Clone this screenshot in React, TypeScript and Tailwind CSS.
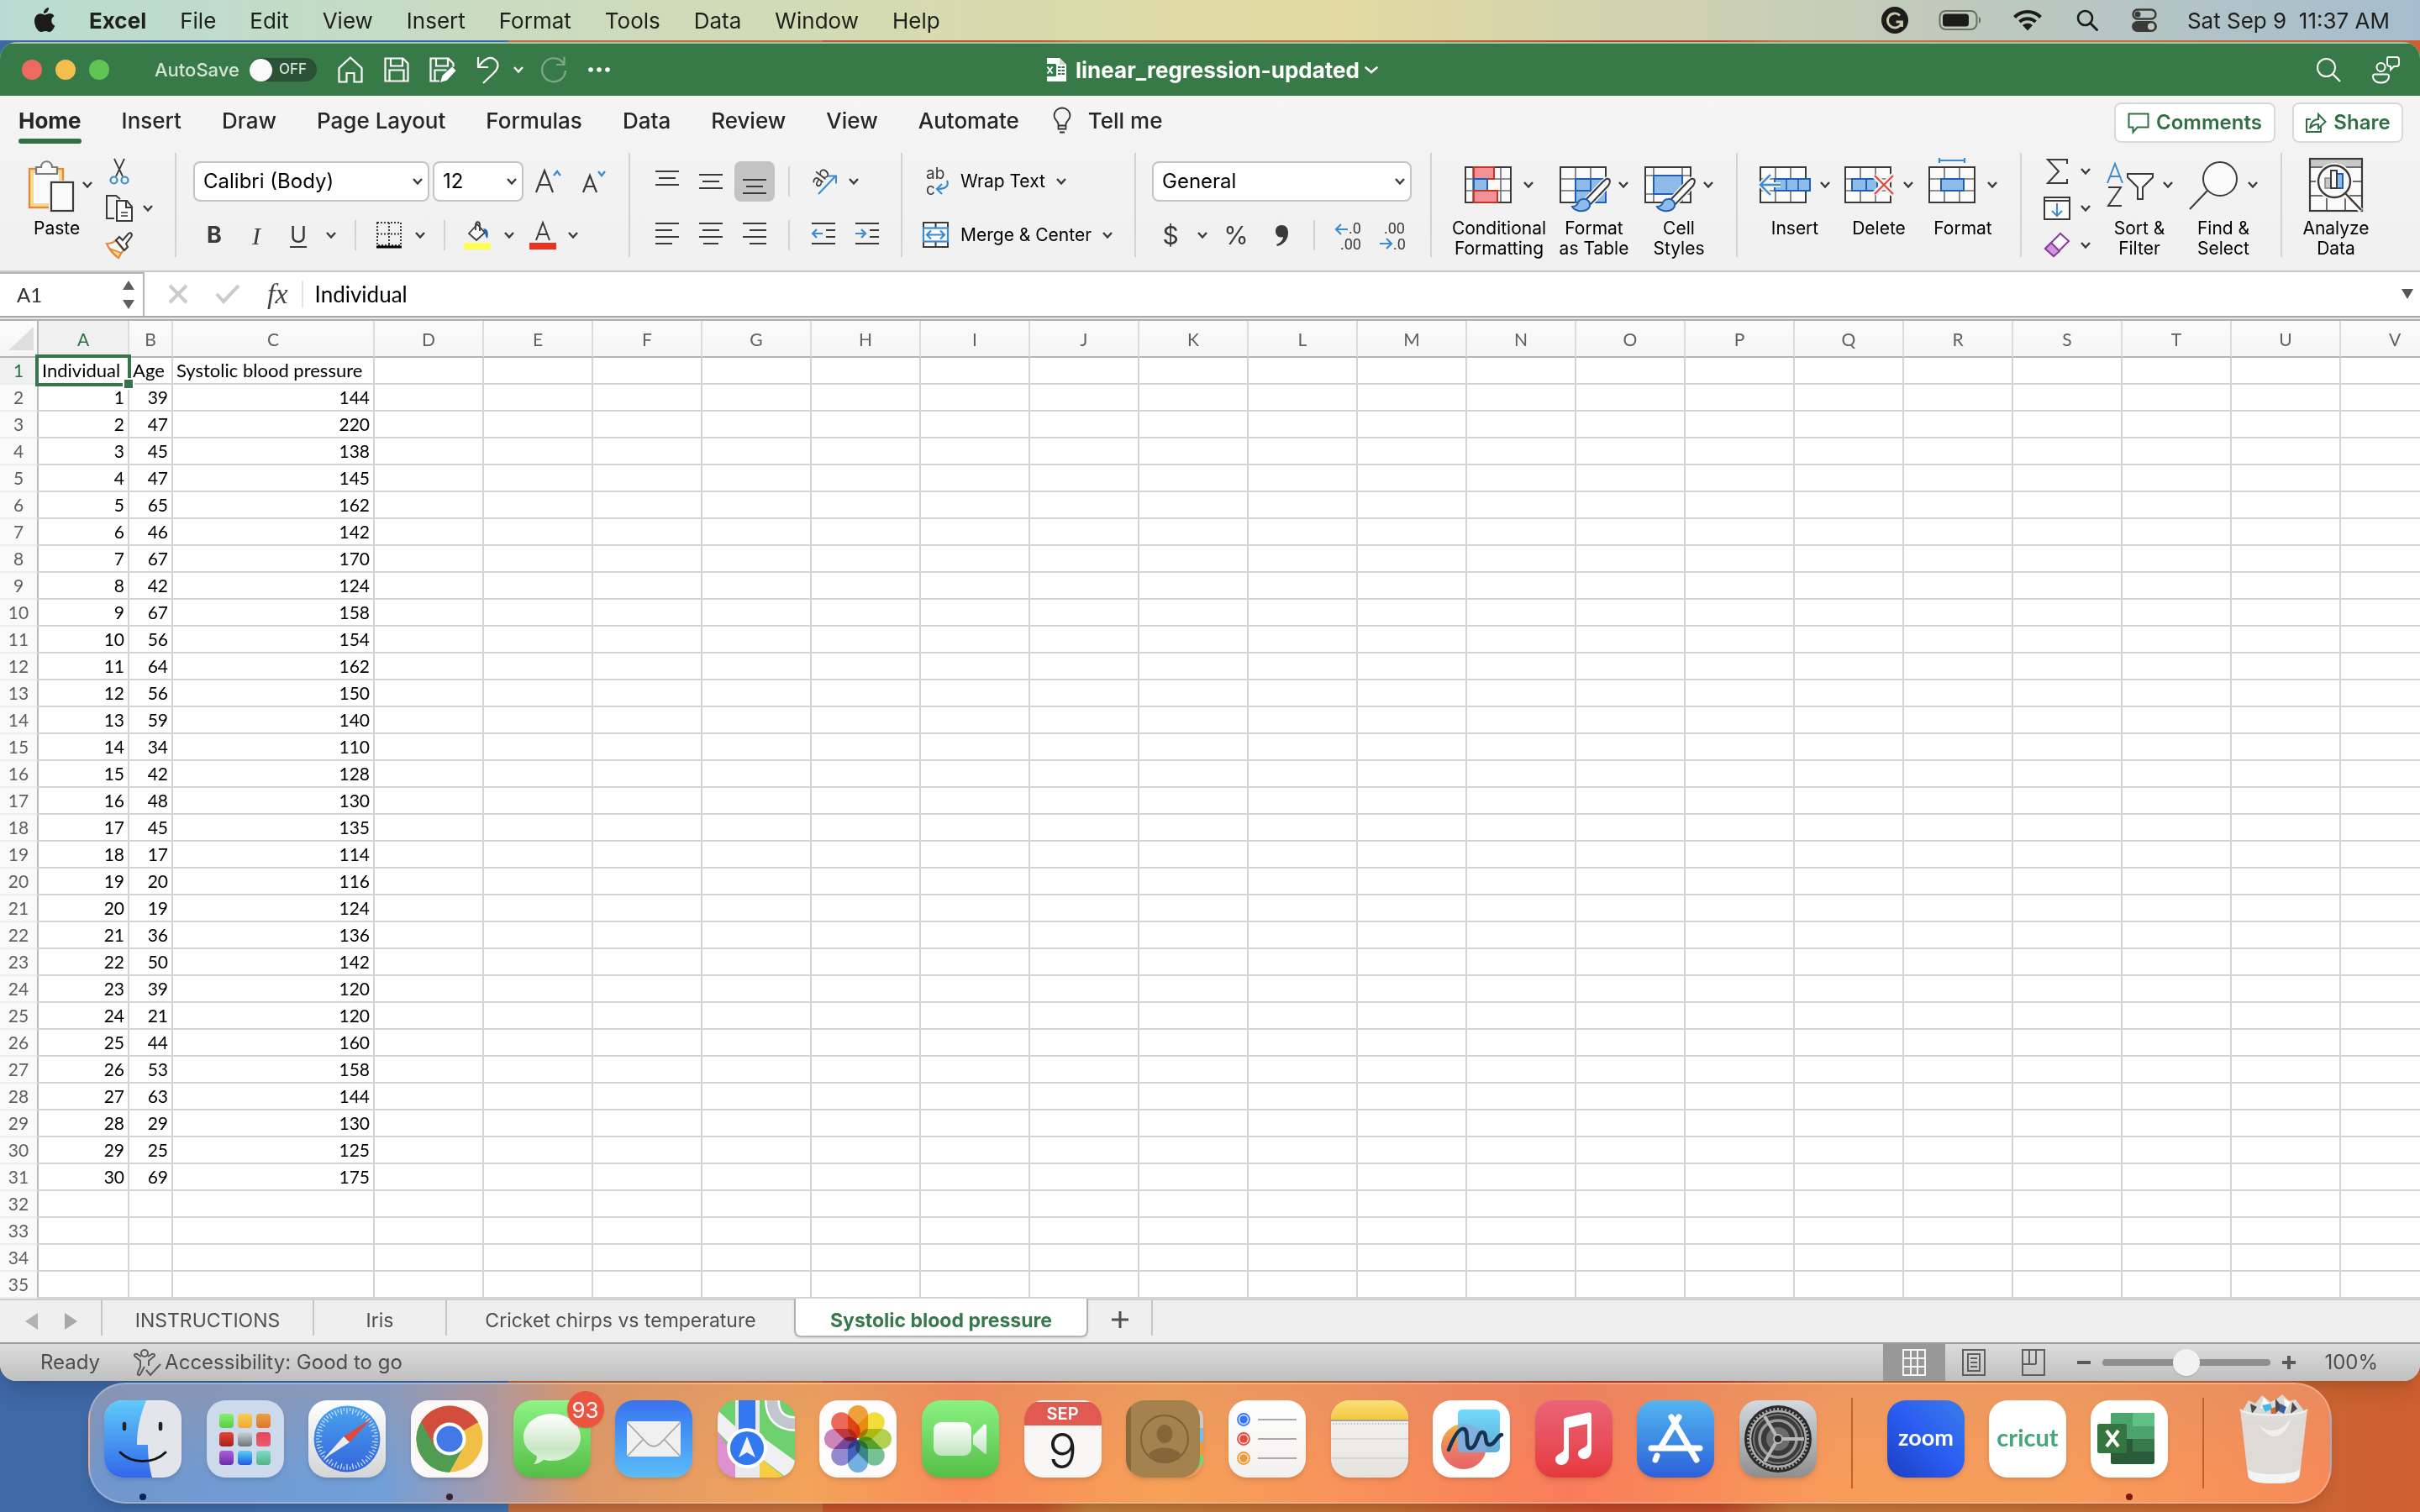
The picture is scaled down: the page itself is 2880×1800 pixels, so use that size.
import { useState } from 'react';
import type { ReactNode } from 'react';

const menus = ['File', 'Edit', 'View', 'Insert', 'Format', 'Tools', 'Data', 'Window', 'Help'];

const ribbonTabs = [
  'Home',
  'Insert',
  'Draw',
  'Page Layout',
  'Formulas',
  'Data',
  'Review',
  'View',
  'Automate',
];

const columns = 'ABCDEFGHIJKLMNOPQRSTUV'.split('');

// [age, systolic blood pressure]
const readings = [
  [39, 144],
  [47, 220],
  [45, 138],
  [47, 145],
  [65, 162],
  [46, 142],
  [67, 170],
  [42, 124],
  [67, 158],
  [56, 154],
  [64, 162],
  [56, 150],
  [59, 140],
  [34, 110],
  [42, 128],
  [48, 130],
  [45, 135],
  [17, 114],
  [20, 116],
  [19, 124],
  [36, 136],
  [50, 142],
  [39, 120],
  [21, 120],
  [44, 160],
  [53, 158],
  [63, 144],
  [29, 130],
  [25, 125],
  [69, 175],
];

const INK = '#3b3a39';
const BLUE = '#3c8bd0';
const FILL = '#8fbbe8';
const EDGE = '#1f60b5';

interface IconProps {
  w: number;
  h: number;
  className?: string;
  children: ReactNode;
}

function Icon({ w, h, className = '', children }: IconProps) {
  return (
    <svg
      width={w}
      height={h}
      viewBox={`0 0 ${w} ${h}`}
      fill="none"
      className={`shrink-0 overflow-visible ${className}`}
      aria-hidden="true"
    >
      {children}
    </svg>
  );
}

function Chevron({ color = INK }: { color?: string }) {
  return (
    <Icon w={12} h={8}>
      <path d="M1 1l5 5.5L11 1" stroke={color} strokeWidth="2.4" />
    </Icon>
  );
}

function ChevronButton({ label, className = '' }: { label: string; className?: string }) {
  return (
    <button
      type="button"
      aria-label={label}
      className={`flex h-9 w-7 shrink-0 items-center justify-center ${className}`}
    >
      <Chevron />
    </button>
  );
}

interface ToolProps {
  label: string;
  className?: string;
  children: ReactNode;
}

function Tool({ label, className = '', children }: ToolProps) {
  return (
    <button
      type="button"
      aria-label={label}
      className={`flex shrink-0 items-center justify-center ${className}`}
    >
      {children}
    </button>
  );
}

function ShortRule({ className = '' }: { className?: string }) {
  return <span className={`h-9 w-0.5 shrink-0 bg-[#d3d3d3] ${className}`} />;
}

function Group({ className = '', children }: { className?: string; children: ReactNode }) {
  return (
    <div className={`h-[124px] shrink-0 border-r-2 border-[#d3d3d3] ${className}`}>{children}</div>
  );
}

interface SelectBoxProps {
  label: string;
  value: string;
  className?: string;
}

function SelectBox({ label, value, className = '' }: SelectBoxProps) {
  return (
    <span className={`relative block h-12 shrink-0 ${className}`}>
      <select
        aria-label={label}
        defaultValue={value}
        className="h-full w-full appearance-none rounded-lg border-2 border-[#c4c4c4] bg-white pl-2.5 text-[24px] text-black"
      >
        <option>{value}</option>
      </select>
      <span className="pointer-events-none absolute inset-y-0 right-2 flex items-center">
        <Chevron />
      </span>
    </span>
  );
}

interface BigToolProps {
  lines: string[];
  icon: ReactNode;
  menu?: boolean;
  className?: string;
}

function BigTool({ lines, icon, menu = true, className = '' }: BigToolProps) {
  return (
    <button type="button" className={`flex shrink-0 flex-col items-center pt-1.5 ${className}`}>
      <span className="flex h-16 items-center gap-2.5">
        {icon}
        {menu && <Chevron />}
      </span>
      <span className="mt-2 block text-center text-[21px] leading-6 text-black">
        {lines.map((line) => (
          <span key={line} className="block whitespace-nowrap">
            {line}
          </span>
        ))}
      </span>
    </button>
  );
}

function MenuBar() {
  return (
    <header className="flex h-12 shrink-0 items-center bg-linear-to-r from-[#b9dcd2] via-[#e2daa0] via-55% to-[#a5bdcf] pl-10 pr-9 text-[26px] text-[#20211d]">
      <Icon w={26} h={32}>
        <path
          d="M18 1c.4 3.600-2.600 7-6 7C11.500 4.500 14.500 1.500 18 1zM24.500 11.300c-2 1.200-3.200 3-3.200 5.400 0 2.800 1.600 4.900 4 5.900-.9 2.800-3.400 7.400-6.300 7.400-1.800 0-2.700-1.100-5-1.100s-3.300 1.100-5 1.100C5.300 30 1 23.500 1 17c0-5.600 3.600-8.700 7.200-8.700 2.300 0 4 1.400 5.500 1.400 1.400 0 3.300-1.600 6-1.600 1.700 0 3.700.9 4.800 3.200z"
          fill="#1b1c19"
        />
      </Icon>
      <nav className="ml-10 flex items-center gap-10">
        <button type="button" className="font-bold">
          Excel
        </button>
        {menus.map((name) => (
          <button type="button" key={name}>
            {name}
          </button>
        ))}
      </nav>
      <div className="ml-auto flex items-center">
        <Icon w={32} h={32}>
          <circle cx="16" cy="16" r="16" fill="#1c1c1a" />
          <path
            d="M22 10.500A8.500 8.500 0 1 0 24.300 18H17.500M24.500 17v7"
            stroke="#cdc9ae"
            strokeWidth="2.800"
          />
        </Icon>
        <Icon w={52} h={26} className="ml-9">
          <rect x="1.500" y="2" width="44" height="22" rx="7" stroke="#6c6d63" strokeWidth="2" />
          <rect x="5" y="5.500" width="31" height="15" rx="3.500" fill="#1c1c1a" />
          <path d="M48 9c3 1 3 7 0 8z" fill="#6c6d63" />
        </Icon>
        <Icon w={36} h={26} className="ml-9">
          <path
            d="M2.500 9.500a22 22 0 0 1 31 0M8.500 15a14 14 0 0 1 19 0"
            stroke="#1c1c1a"
            strokeWidth="4"
          />
          <path d="M12 19a9 9 0 0 1 12 0l-6 6.500z" fill="#1c1c1a" />
        </Icon>
        <Icon w={26} h={26} className="ml-10">
          <circle cx="10.500" cy="10.500" r="8.500" stroke="#1c1c1a" strokeWidth="2.600" />
          <path d="M16.500 16.500l8 8" stroke="#1c1c1a" strokeWidth="3" strokeLinecap="round" />
        </Icon>
        <Icon w={30} h={28} className="ml-10">
          <rect x="1.500" y="1.500" width="27" height="11" rx="5.500" stroke="#3a3b37" strokeWidth="2.400" />
          <circle cx="7" cy="7" r="3.500" fill="#3a3b37" />
          <rect x="0" y="15" width="30" height="13" rx="6.500" fill="#3a3b37" />
          <circle cx="23" cy="21.500" r="4" fill="#c4c9bd" />
        </Icon>
        <time className="ml-9 whitespace-pre">Sat Sep 9  11:37 AM</time>
      </div>
    </header>
  );
}

function TitleBar() {
  return (
    <div className="flex h-16 shrink-0 items-center border-t-2 border-[#a4c5ac] bg-[#387948] pl-[26px] pr-[24px] text-white">
      <div className="flex flex-1 items-center">
        <div className="flex gap-4">
          <button type="button" aria-label="Close" className="size-6 rounded-full bg-[#ee6a5f]" />
          <button type="button" aria-label="Minimize" className="size-6 rounded-full bg-[#f5bf4f]" />
          <button type="button" aria-label="Zoom" className="size-6 rounded-full bg-[#61c554]" />
        </div>
        <label className="ml-[54px] flex items-center gap-3 text-[22px] font-medium text-[#d3e4d7]">
          AutoSave
          <input type="checkbox" className="peer sr-only" />
          <span className="flex h-7 w-20 items-center rounded-full bg-[#2b5136] text-[17px] font-medium shadow-inner">
            <span className="mr-2 size-[27px] rounded-full bg-[#fafafa]" />
            OFF
          </span>
        </label>
        <Tool label="Home" className="ml-6">
          <Icon w={32} h={34}>
            <path
              d="M2.500 15L16 2.500 29.500 15v16.500h-9V21h-9v10.500h-9z"
              stroke="white"
              strokeWidth="2.200"
            />
          </Icon>
        </Tool>
        <Tool label="Save" className="ml-6">
          <Icon w={30} h={30}>
            <path
              d="M1.500 1.500h21l6 6v21h-27zM8 1.500v9h14v-9M6.500 28.500v-13h17v13"
              stroke="white"
              strokeWidth="2.200"
            />
          </Icon>
        </Tool>
        <Tool label="Save As" className="ml-6">
          <Icon w={32} h={32}>
            <path
              d="M12 29.500H1.500v-27h21l6 6v4M8 2.500v9h14v-9M6.500 29v-12.500h14"
              stroke="white"
              strokeWidth="2.200"
            />
            <path d="M13 31l2.500-8L27 12.500l4.500 4.500L21 28.500z" fill="white" />
          </Icon>
        </Tool>
        <Tool label="Undo" className="ml-6">
          <Icon w={28} h={34}>
            <path
              d="M2 2v12h12M2.500 13.500C8 5 16 0 22 5c7 6 2 13-2 16.500L8 33"
              stroke="white"
              strokeWidth="2.200"
            />
          </Icon>
        </Tool>
        <Tool label="Undo history" className="ml-4">
          <Chevron color="white" />
        </Tool>
        <Tool label="Redo" className="ml-5">
          <Icon w={32} h={34}>
            <path
              d="M28.500 1.500v9.500H19M28 10A14 14 0 1 0 30 18"
              stroke="#7da887"
              strokeWidth="2.200"
            />
          </Icon>
        </Tool>
        <Tool label="More" className="ml-6">
          <Icon w={28} h={6}>
            <circle cx="4" cy="3" r="2.800" fill="white" />
            <circle cx="14" cy="3" r="2.800" fill="white" />
            <circle cx="24" cy="3" r="2.800" fill="white" />
          </Icon>
        </Tool>
      </div>
      <button type="button" className="flex items-center gap-2.5 text-[26px] font-bold">
        <Icon w={28} h={30}>
          <path d="M4 1h15l8 8v20H4z" fill="white" />
          <path d="M19 1v8h8z" fill="#cfdcd2" />
          <path d="M17 12h9M17 16h9M17 20h9" stroke="#387948" strokeWidth="2" strokeDasharray="3.500 1" />
          <rect x="0" y="8" width="15" height="15" rx="1.500" fill="#2e7d46" />
          <path d="M4.500 11.500l6 8M10.500 11.500l-6 8" stroke="white" strokeWidth="2" />
        </Icon>
        <span>linear_regression-updated</span>
        <Icon w={16} h={9} className="-ml-1">
          <path d="M1.500 1.500L8 7l6.500-5.500" stroke="white" strokeWidth="2.600" strokeLinecap="round" />
        </Icon>
      </button>
      <div className="flex flex-1 items-center justify-end gap-9">
        <Tool label="Search">
          <Icon w={30} h={30}>
            <circle cx="12.500" cy="12.500" r="10.500" stroke="white" strokeWidth="2" />
            <path d="M20 20l9 9" stroke="white" strokeWidth="2.200" />
          </Icon>
        </Tool>
        <Tool label="Presence">
          <Icon w={34} h={34}>
            <circle cx="11.500" cy="14" r="5" stroke="white" strokeWidth="2" />
            <path
              d="M4 22.500h15c2 0 2.500 2 1.500 5-1.500 3.500-5 5-9 5s-7.500-1.500-9-5c-1-3-.5-5 1.500-5zM20 2h10c2 0 3 1 3 3v5c0 2-1 3-3 3h-3l-4 4v-4c-3 0-4-1-4-3V4c0-1 .5-2 1-2z"
              stroke="white"
              strokeWidth="2"
            />
          </Icon>
        </Tool>
      </div>
    </div>
  );
}

function RibbonTabs() {
  const [active, setActive] = useState('Home');

  return (
    <div className="flex h-16 shrink-0 items-center pl-[22px] pr-5 text-[26px] font-medium text-[#262626]">
      <div role="tablist" className="-mt-1.5 flex items-center gap-12">
        {ribbonTabs.map((name) => (
          <button
            type="button"
            role="tab"
            key={name}
            aria-selected={active === name}
            onClick={() => setActive(name)}
            className={`relative whitespace-nowrap ${active === name ? 'font-bold' : ''}`}
          >
            {name}
            {active === name && (
              <span className="absolute inset-x-0 -bottom-2 h-1.5 rounded-full bg-[#2f6f43]" />
            )}
          </button>
        ))}
      </div>
      <button type="button" className="-mt-1.5 ml-10 flex items-center gap-5">
        <Icon w={22} h={31}>
          <path
            d="M6.500 20c0-4-5-5-5-10.500a9.500 9 0 0 1 19 0c0 5.500-5 6.500-5 10.500v5.500h-9zM6.500 21.500h9M8 29.500h6"
            stroke="#333"
            strokeWidth="1.800"
          />
        </Icon>
        Tell me
      </button>
      <div className="ml-auto flex items-center gap-5 text-[24px] font-semibold text-[#2f6f43]">
        <button
          type="button"
          className="flex h-12 w-48 items-center justify-center gap-2 rounded-lg border-2 border-[#d9d9d9] bg-white"
        >
          <Icon w={26} h={26}>
            <path d="M1.500 2.500h23v16h-13l-5 6v-6h-5z" stroke="#2f6f43" strokeWidth="2" />
          </Icon>
          Comments
        </button>
        <button
          type="button"
          className="flex h-12 w-[132px] items-center justify-center gap-2 rounded-lg border-2 border-[#d9d9d9] bg-white"
        >
          <Icon w={26} h={26}>
            <path
              d="M7 9H2v15h17v-6M6 20c1-7 4-11 10-11V3l8.500 9-8.500 8v-5c-5 0-7.500 1-10 5z"
              stroke="#2f6f43"
              strokeWidth="2"
            />
          </Icon>
          Share
        </button>
      </div>
    </div>
  );
}

const lineSets = {
  top: 'M0 5h28M4 13h20M0 21h28',
  middle: 'M0 9h28M4 17h20M0 25h28',
  bottom: 'M0 15h28M4 23h20M0 31h28',
  left: 'M0 3h28M0 11h20M0 19h28M0 27h20',
  center: 'M0 3h28M4 11h20M0 19h28M5 27h18',
  right: 'M0 3h28M8 11h20M0 19h28M8 27h20',
};

function Lines({ d }: { d: string }) {
  return (
    <Icon w={28} h={34}>
      <path d={d} stroke={INK} strokeWidth="2.200" />
    </Icon>
  );
}

// 56x44 sheet used by most of the large cell icons
function SheetGrid({ y = 10 }: { y?: number }) {
  return (
    <g transform={`translate(0 ${y})`}>
      <rect x="1" y="1" width="54" height="42" fill="#fafafa" />
      <path d="M19 1v42M37 1v42M1 15h54M1 29h54" stroke="#6d6d6d" strokeWidth="1.600" />
      <rect x="1" y="1" width="54" height="42" stroke={INK} strokeWidth="2" />
    </g>
  );
}

function Brush() {
  return (
    <>
      <path d="M58 25c3 1 2 5 0 8L37 55l-6-5 20-21c3-3 5-5 7-4z" fill="#fafafa" stroke="#f2f2f2" strokeWidth="5" />
      <path d="M58 25c3 1 2 5 0 8L37 55l-6-5 20-21c3-3 5-5 7-4z" fill="#fafafa" stroke={INK} strokeWidth="2" />
      <path
        d="M28 49c4-1 9 3 8 8-1 5-8 7-13 6-4-1-7-3-8-5 4 0 6-2 7-5 1-2 3-4 6-4z"
        fill={FILL}
        stroke={EDGE}
        strokeWidth="2"
      />
    </>
  );
}

function Ribbon() {
  return (
    <div className="flex h-[146px] shrink-0 overflow-hidden border-b-2 border-[#c9c9c9] pt-1">
      <Group className="flex w-[210px] pl-8">
        <button type="button" className="flex w-20 flex-col pt-1.5">
          <span className="flex h-16 items-center gap-2">
            <Icon w={58} h={64}>
              <rect x="3" y="13" width="40" height="46" fill="#f5d990" stroke="#e08b3e" strokeWidth="2.400" />
              <rect x="8" y="18" width="30" height="36" fill="#fafafa" />
              <path
                d="M11 19v-8h6c0-9 13-9 13 0h6v8z"
                fill="#fafafa"
                stroke="#7a7a7a"
                strokeWidth="2.200"
              />
              <rect x="26" y="27" width="32" height="37" fill="#f2f2f2" />
              <rect x="29" y="29" width="26" height="34" fill="#fafafa" stroke={INK} strokeWidth="2.200" />
            </Icon>
            <Chevron />
          </span>
          <span className="mt-2 block pl-2 text-left text-[21px] leading-6 text-black">Paste</span>
        </button>
        <div className="ml-3.5 flex flex-col gap-3 pt-1.5">
          <Tool label="Cut" className="h-8 w-8">
            <Icon w={32} h={32}>
              <path d="M10 1l10 21M22 1L12 22" stroke={INK} strokeWidth="1.800" />
              <circle cx="9.500" cy="26.500" r="4" stroke={BLUE} strokeWidth="2.200" />
              <circle cx="22.500" cy="26.500" r="4" stroke={BLUE} strokeWidth="2.200" />
            </Icon>
          </Tool>
          <div className="flex h-8 items-center">
            <Tool label="Copy" className="w-8">
              <Icon w={32} h={32}>
                <path d="M10 28H1V1h11l5 4" stroke={INK} strokeWidth="2" />
                <path d="M13 7h12l6 7v17H13zM24 7v8h7" fill="#fafafa" stroke={INK} strokeWidth="2" />
                <path d="M18 21h8M18 25h8" stroke={INK} strokeWidth="1.500" />
              </Icon>
            </Tool>
            <ChevronButton label="Copy options" className="ml-1" />
          </div>
          <Tool label="Format Painter" className="h-8 w-8">
            <Icon w={32} h={32}>
              <path d="M1 14c5 0 8-1 11-4l9 12c-2 2-4 5-6 9C9 27 4 21 1 14z" fill="#fafafa" stroke="#e08b3e" strokeWidth="2.200" />
              <path d="M5 20l13 5-3 6C11 28 8 25 5 20z" fill="#f5d990" stroke="#e08b3e" strokeWidth="1.800" />
              <path
                d="M12 10l4-4 4 4 7-8c3-2 5 1 3 4l-6 8 2 4-4 4z"
                fill="#fafafa"
                stroke={INK}
                strokeWidth="2"
              />
            </Icon>
          </Tool>
        </div>
      </Group>

      <Group className="w-[540px] pl-5 pt-2.5">
        <div className="flex items-center">
          <SelectBox label="Font" value="Calibri (Body)" className="w-[281px]" />
          <SelectBox label="Font Size" value="12" className="ml-1 w-[108px]" />
          <Tool label="Increase Font Size" className="ml-3.5">
            <Icon w={32} h={32}>
              <path d="M1 29L11 3l10 26M5 20h12" stroke={INK} strokeWidth="2.200" />
              <path d="M22 9l4-5 4 5" stroke={BLUE} strokeWidth="2.400" />
            </Icon>
          </Tool>
          <Tool label="Decrease Font Size" className="ml-6">
            <Icon w={30} h={32}>
              <path d="M1 29L9 9l8 20M4 22h10" stroke={INK} strokeWidth="2.200" />
              <path d="M19 4l4 5 4-5" stroke={BLUE} strokeWidth="2.400" />
            </Icon>
          </Tool>
        </div>
        <div className="mt-[22px] flex h-9 items-center text-[27px] text-[#3b3a39]">
          <Tool label="Bold" className="w-[50px] font-bold">
            B
          </Tool>
          <Tool label="Italic" className="w-[50px] font-['Liberation_Serif',serif] text-[30px] italic">
            I
          </Tool>
          <Tool label="Underline" className="w-[50px] underline underline-offset-4">
            U
          </Tool>
          <ChevronButton label="Underline options" />
          <ShortRule className="ml-3.5" />
          <Tool label="Borders" className="ml-6">
            <Icon w={30} h={32}>
              <path
                d="M1 1h28v27H1zM15 1v27M1 14.500h28"
                stroke={INK}
                strokeWidth="2"
                strokeDasharray="2 2"
              />
              <path d="M0 30h30" stroke="#000" strokeWidth="3" />
            </Icon>
          </Tool>
          <ChevronButton label="Border options" className="ml-2" />
          <ShortRule className="ml-3.5" />
          <Tool label="Fill Color" className="ml-[22px]">
            <Icon w={32} h={34}>
              <path d="M6 15L16 4l9 10-10 9zM14 11V5c0-5 5-5 5 0v7" fill="#fafafa" stroke={INK} strokeWidth="1.800" />
              <path d="M23 9c5 0 7 4 5 12-3-2-2-7-5-12z" fill={EDGE} />
              <rect y="26" width="32" height="8" fill="#fffe54" />
            </Icon>
          </Tool>
          <ChevronButton label="Fill options" className="ml-2" />
          <Tool label="Font Color" className="ml-2.5">
            <Icon w={32} h={34}>
              <path d="M8 23L16 2l8 21M11 16h10" stroke={INK} strokeWidth="2" />
              <rect y="26" width="32" height="8" fill="#ea3323" />
            </Icon>
          </Tool>
          <ChevronButton label="Font color options" className="ml-1.5" />
        </div>
      </Group>

      <Group className="w-[324px] pl-[18px] pt-2.5">
        <div className="flex items-center">
          <Tool label="Top Align" className="h-12 w-[52px]">
            <Lines d={lineSets.top} />
          </Tool>
          <Tool label="Middle Align" className="h-12 w-[52px]">
            <Lines d={lineSets.middle} />
          </Tool>
          <Tool label="Bottom Align" className="mx-0.5 h-12 w-12 rounded-lg bg-[#c3c3c3]">
            <Lines d={lineSets.bottom} />
          </Tool>
          <ShortRule className="ml-3.5" />
          <Tool label="Orientation" className="ml-6">
            <Icon w={32} h={32}>
              <text
                x="0"
                y="0"
                transform="translate(10 24) rotate(-52)"
                fontSize="20"
                fill={INK}
              >
                ab
              </text>
              <path d="M10 31L30 10M21 9.500h10v9" stroke={BLUE} strokeWidth="2" />
            </Icon>
          </Tool>
          <ChevronButton label="Orientation options" className="ml-1.5" />
        </div>
        <div className="mt-[22px] flex h-9 items-center">
          <Tool label="Align Left" className="w-[52px]">
            <Lines d={lineSets.left} />
          </Tool>
          <Tool label="Center" className="w-[52px]">
            <Lines d={lineSets.center} />
          </Tool>
          <Tool label="Align Right" className="w-[52px]">
            <Lines d={lineSets.right} />
          </Tool>
          <ShortRule className="ml-3.5" />
          <Tool label="Decrease Indent" className="ml-3.5 w-[52px]">
            <Icon w={28} h={34}>
              <path d="M0 3h28M17 11h11M17 19h11M0 27h28" stroke={INK} strokeWidth="2.200" />
              <path d="M1 15h12M6 10l-5 5 5 5" stroke={BLUE} strokeWidth="2.200" />
            </Icon>
          </Tool>
          <Tool label="Increase Indent" className="w-[52px]">
            <Icon w={28} h={34}>
              <path d="M0 3h28M17 11h11M17 19h11M0 27h28" stroke={INK} strokeWidth="2.200" />
              <path d="M0 15h12M7 10l5 5-5 5" stroke={BLUE} strokeWidth="2.200" />
            </Icon>
          </Tool>
        </div>
      </Group>

      <Group className="w-[278px] pl-6 pt-2.5 text-[21px] text-black">
        <button type="button" className="flex h-12 items-center gap-[13px]">
          <Icon w={32} h={34}>
            <text x="4" y="14" fontSize="19" fill={INK}>
              ab
            </text>
            <text x="4" y="33" fontSize="19" fill={INK} className="leading-none">
              c
            </text>
            <path d="M29 16c3 7-3 10-11 10M23 20l-6 6 6 6" stroke={BLUE} strokeWidth="2.200" />
          </Icon>
          Wrap Text
          <Chevron />
        </button>
        <button type="button" className="mt-[22px] flex h-9 items-center gap-[13px] whitespace-nowrap">
          <Icon w={32} h={32}>
            <rect x="1" y="1" width="29" height="29" fill="#fafafa" stroke={INK} strokeWidth="2" />
            <path d="M15.500 1v6M15.500 24v6" stroke={INK} strokeWidth="2" />
            <rect x="1" y="7.500" width="29" height="16" fill="#fafafa" stroke={BLUE} strokeWidth="2.200" />
            <path d="M5 15.500h21M10 10.500l-5 5 5 5M21 10.500l5 5-5 5" stroke={BLUE} strokeWidth="2.200" />
          </Icon>
          Merge &amp; Center
          <Chevron />
        </button>
      </Group>

      <Group className="w-[352px] pl-[19px] pt-2.5">
        <SelectBox label="Number Format" value="General" className="w-[309px]" />
        <div className="mt-[22px] flex h-9 items-center text-[30px] text-[#3b3a39]">
          <Tool label="Currency" className="ml-1 w-9">
            $
          </Tool>
          <ChevronButton label="Currency options" className="ml-1.5" />
          <Tool label="Percent" className="ml-2 w-9">
            %
          </Tool>
          <Tool label="Comma Style" className="ml-[18px] w-9">
            <Icon w={18} h={28}>
              <path
                d="M9 2c5 0 8 3 8 9 0 8-5 14-13 16l-1-2c5-2 8-5 8-9-5 2-9-2-9-7 0-4 3-7 7-7z"
                fill={INK}
              />
            </Icon>
          </Tool>
          <ShortRule className="ml-5" />
          <Tool label="Increase Decimal" className="ml-6 font-[Roboto,sans-serif]">
            <Icon w={32} h={34}>
              <path d="M1 10h14M7 4l-6 6 6 6" stroke={BLUE} strokeWidth="2.200" />
              <text x="16" y="15" fontSize="18" fill={INK}>
                .0
              </text>
              <text x="6" y="34" fontSize="18" fill={INK}>
                .00
              </text>
            </Icon>
          </Tool>
          <Tool label="Decrease Decimal" className="ml-5 font-[Roboto,sans-serif]">
            <Icon w={32} h={34}>
              <path d="M1 27h14M9 21l6 6-6 6" stroke={BLUE} strokeWidth="2.200" />
              <text x="6" y="15" fontSize="18" fill={INK}>
                .00
              </text>
              <text x="17" y="34" fontSize="18" fill={INK}>
                .0
              </text>
            </Icon>
          </Tool>
        </div>
      </Group>

      <Group className="flex w-[364px] pl-5">
        <BigTool
          lines={['Conditional', 'Formatting']}
          className="w-[120px]"
          icon={
            <Icon w={60} h={64}>
              <rect x="1" y="11" width="54" height="42" fill="#fafafa" />
              <path d="M10 11v42M26 11v42M43 11v42M1 25h54M1 39h54" stroke="#6d6d6d" strokeWidth="1.600" />
              <rect x="1" y="11" width="54" height="42" stroke={INK} strokeWidth="2" />
              <rect x="11" y="11" width="24" height="14" fill="#f19095" stroke="#c43522" strokeWidth="2" />
              <rect x="11" y="25" width="16" height="14" fill={FILL} stroke={EDGE} strokeWidth="2" />
              <rect x="11" y="39" width="28" height="14" fill="#f19095" stroke="#c43522" strokeWidth="2" />
            </Icon>
          }
        />
        <BigTool
          lines={['Format', 'as Table']}
          className="w-[106px]"
          icon={
            <Icon w={60} h={64}>
              <SheetGrid />
              <rect x="19" y="25" width="36" height="28" fill={FILL} stroke={EDGE} strokeWidth="2" />
              <path d="M37 25v28M19 39h36" stroke={EDGE} strokeWidth="2" />
              <Brush />
            </Icon>
          }
        />
        <BigTool
          lines={['Cell', 'Styles']}
          className="w-24"
          icon={
            <Icon w={60} h={64}>
              <rect x="1" y="11" width="54" height="42" fill="#fafafa" />
              <path d="M11 11v42M45 11v42M1 21h54M1 43h54" stroke="#6d6d6d" strokeWidth="1.600" />
              <rect x="1" y="11" width="54" height="42" stroke={INK} strokeWidth="2" />
              <rect x="11" y="21" width="34" height="22" fill={FILL} stroke={EDGE} strokeWidth="2" />
              <Brush />
            </Icon>
          }
        />
      </Group>

      <Group className="flex w-[338px] pl-[18px]">
        <BigTool
          lines={['Insert']}
          className="w-[100px]"
          icon={
            <Icon w={62} h={64}>
              <SheetGrid />
              <rect x="18" y="25" width="42" height="14" fill={FILL} stroke={EDGE} strokeWidth="2" />
              <path d="M32 25v14M46 25v14" stroke={EDGE} strokeWidth="1.600" />
              <path d="M1 32h24M13 20L1 32l12 12" stroke="#f2f2f2" strokeWidth="6" />
              <path d="M1 32h24M13 20L1 32l12 12" stroke={BLUE} strokeWidth="2.400" />
            </Icon>
          }
        />
        <BigTool
          lines={['Delete']}
          className="w-[100px]"
          icon={
            <Icon w={60} h={64}>
              <SheetGrid />
              <rect x="9" y="25" width="30" height="14" fill={FILL} stroke={EDGE} strokeWidth="2" />
              <path d="M26 25v14" stroke={EDGE} strokeWidth="2" />
              <path d="M36 21l22 22M58 21L36 43" stroke="#f2f2f2" strokeWidth="7" />
              <path d="M36 21l22 22M58 21L36 43" stroke="#e0493d" strokeWidth="2.200" />
            </Icon>
          }
        />
        <BigTool
          lines={['Format']}
          className="w-[100px]"
          icon={
            <Icon w={60} h={64}>
              <SheetGrid />
              <rect x="15" y="25" width="27" height="14" fill={FILL} stroke={EDGE} strokeWidth="2" />
              <path d="M13 3h30M13 0v6M43 0v6" stroke={BLUE} strokeWidth="2.200" />
            </Icon>
          }
        />
      </Group>

      <Group className="flex w-[310px] pl-[26px]">
        <div className="flex flex-col gap-3 pt-1.5">
          <div className="flex h-8 items-center">
            <Tool label="AutoSum" className="w-8">
              <Icon w={28} h={30}>
                <path d="M26 6V1H3l13 14L3 29h23v-5" stroke={INK} strokeWidth="2" />
              </Icon>
            </Tool>
            <ChevronButton label="AutoSum options" className="ml-1" />
          </div>
          <div className="flex h-8 items-center">
            <Tool label="Fill" className="w-8">
              <Icon w={32} h={28}>
                <rect x="1" y="1" width="30" height="26" fill="#fafafa" stroke={INK} strokeWidth="2" />
                <path d="M1 5h30" stroke={INK} strokeWidth="2" />
                <path d="M16 8v15M10 17l6 6 6-6" stroke={BLUE} strokeWidth="2" />
              </Icon>
            </Tool>
            <ChevronButton label="Fill options" className="ml-1" />
          </div>
          <div className="flex h-8 items-center">
            <Tool label="Clear" className="w-8">
              <Icon w={32} h={30}>
                <path d="M2 19L20 1l10 9-18 18z" fill="#fafafa" stroke="#8e3a9e" strokeWidth="2" />
                <path d="M2 19l7-7 10 10-7 6z" fill="#cf95dc" stroke="#8e3a9e" strokeWidth="2" />
              </Icon>
            </Tool>
            <ChevronButton label="Clear options" className="ml-1" />
          </div>
        </div>
        <BigTool
          lines={['Sort &', 'Filter']}
          className="w-[100px]"
          icon={
            <Icon w={58} h={64}>
              <path d="M2 30L11 7l9 23M5 22h12" stroke={BLUE} strokeWidth="2" />
              <path d="M3 35h15L3 57h16" stroke={INK} strokeWidth="2" />
              <path d="M26 19h30v4L44 35v14h-6V35L26 23z" fill="#fafafa" stroke={INK} strokeWidth="2" />
            </Icon>
          }
        />
        <BigTool
          lines={['Find &', 'Select']}
          className="w-[100px]"
          icon={
            <Icon w={60} h={64}>
              <circle cx="37" cy="25" r="20" fill="#fafafa" stroke={INK} strokeWidth="2" />
              <path d="M22 39L1 61" stroke={INK} strokeWidth="2" />
            </Icon>
          }
        />
      </Group>

      <BigTool
        lines={['Analyze', 'Data']}
        menu={false}
        className="ml-3 w-[104px]"
        icon={
          <Icon w={64} h={64}>
            <rect x="1" y="1" width="62" height="62" fill="#fafafa" />
            <rect x="1" y="1" width="62" height="10" fill="#c8c8c8" />
            <path d="M1 11h62M1 28h62M1 45h62M21 45v18M43 45v18" stroke="#6d6d6d" strokeWidth="2" />
            <rect x="1" y="1" width="62" height="62" stroke={INK} strokeWidth="2.200" />
            <path d="M42 43l20 20" stroke="#fafafa" strokeWidth="6" />
            <circle cx="30" cy="28" r="22" fill="#fafafa" />
            <circle cx="30" cy="28" r="19" fill="#fafafa" stroke={INK} strokeWidth="2.400" />
            <path d="M43 42l19 20" stroke={INK} strokeWidth="2.400" />
            <rect x="19" y="24" width="7" height="12" fill="#c8c8c8" stroke="#8a8a8a" strokeWidth="1.600" />
            <rect x="33" y="19" width="7" height="17" fill={FILL} stroke={EDGE} strokeWidth="2" />
            <rect x="26" y="15" width="7" height="21" fill="#fafafa" stroke={INK} strokeWidth="2" />
          </Icon>
        }
      />
    </div>
  );
}

function FormulaBar() {
  return (
    <div className="flex h-[52px] shrink-0 items-center bg-white">
      <div className="flex h-full w-[172px] items-center justify-between border-r-2 border-t-2 border-[#b5b5b5] pl-5 pr-2.5">
        <input
          aria-label="Name Box"
          defaultValue="A1"
          className="w-24 bg-transparent font-[Lato,sans-serif] text-[24px] text-[#333] outline-none"
        />
        <Icon w={14} h={34}>
          <path d="M7 0l7 11H0zM7 34l7-11H0z" fill="#5f5f5f" />
        </Icon>
      </div>
      <Tool label="Cancel" className="ml-7">
        <Icon w={24} h={24}>
          <path d="M2 2l20 20M22 2L2 22" stroke="#cbcbcb" strokeWidth="4" />
        </Icon>
      </Tool>
      <Tool label="Enter" className="ml-8">
        <Icon w={30} h={24}>
          <path d="M2 12l8 9L28 2" stroke="#cbcbcb" strokeWidth="4" />
        </Icon>
      </Tool>
      <Tool
        label="Insert Function"
        className="ml-8 font-['Liberation_Serif',serif] text-[34px] leading-8 text-[#444] italic"
      >
        fx
      </Tool>
      <span className="ml-4 h-8 w-0.5 bg-[#e2e2e2]" />
      <input
        aria-label="Formula"
        defaultValue="Individual"
        className="ml-3.5 min-w-0 flex-1 bg-transparent font-[Lato,sans-serif] text-[26px] text-black outline-none"
      />
      <Tool label="Expand formula bar" className="mr-2">
        <Icon w={14} h={12}>
          <path d="M0 0h14L7 12z" fill="#555" />
        </Icon>
      </Tool>
    </div>
  );
}

function columnWidth(letter: string) {
  switch (letter) {
    case 'A':
      return 'w-[108px]';
    case 'B':
      return 'w-[52px]';
    case 'C':
      return 'w-[240px]';
    default:
      return 'w-[130px]';
  }
}

function cellValue(row: number, letter: string) {
  if (row === 1) {
    return { A: 'Individual', B: 'Age', C: 'Systolic blood pressure' }[letter];
  }
  const reading = readings[row - 2];
  if (!reading) {
    return undefined;
  }
  return { A: row - 1, B: reading[0], C: reading[1] }[letter];
}

function Sheet() {
  const rows = Array.from({ length: 35 }, (_, i) => i + 1);

  return (
    <main className="min-h-0 flex-1 overflow-hidden bg-white">
      <table className="w-max table-fixed border-separate border-spacing-0 font-[Lato,sans-serif] text-[21px] leading-[30px] text-black">
        <colgroup>
          <col className="w-[46px]" />
          {columns.map((letter) => (
            <col key={letter} className={columnWidth(letter)} />
          ))}
        </colgroup>
        <thead>
          <tr className="h-11 bg-linear-to-b from-[#fbfbfb] to-[#f5f5f5] text-[#606060]">
            <th className="border-b-2 border-r-2 border-b-[#b4b4b4] border-r-[#b9b9b9] p-0">
              <Icon w={32} h={32} className="ml-2.5">
                <path d="M30 2v28H0z" fill="#dedede" />
              </Icon>
            </th>
            {columns.map((letter) => (
              <th
                key={letter}
                scope="col"
                className={`border-b-2 border-r-2 border-b-[#b4b4b4] border-r-[#dcdcdc] p-0 pt-0.5 font-normal ${
                  letter === 'A' ? 'bg-[#f0f0f0] text-[#2f6f43]' : ''
                }`}
              >
                {letter}
              </th>
            ))}
          </tr>
        </thead>
        <tbody>
          {rows.map((row) => (
            <tr key={row} className="h-8">
              <th
                scope="row"
                className={`border-b-2 border-r-2 border-b-[#ececec] border-r-[#b9b9b9] p-0 font-normal ${
                  row === 1 ? 'bg-[#f0f0f0] text-[#2f6f43]' : 'bg-[#fafafa] text-[#606060]'
                }`}
              >
                {row}
              </th>
              {columns.map((letter) => (
                <td
                  key={letter}
                  className={`relative whitespace-nowrap border-b-2 border-r-2 border-[#d4d4d4] px-1 py-0 ${
                    row === 1 ? 'text-left text-[22px]' : 'text-right'
                  }`}
                >
                  {cellValue(row, letter)}
                  {row === 1 && letter === 'A' && (
                    <>
                      <span className="absolute -inset-1 z-10 border-4 border-[#38734a]" />
                      <span className="absolute -bottom-2 -right-2 z-10 size-3.5 border-2 border-white bg-[#38734a]" />
                    </>
                  )}
                </td>
              ))}
            </tr>
          ))}
        </tbody>
      </table>
    </main>
  );
}

function SheetTabs() {
  return (
    <div className="flex h-[54px] shrink-0 items-start border-y-2 border-b-[#9c9c9c] border-t-[#cfcfcf] bg-[#efefef] text-[23px] text-[#505050]">
      <div className="flex h-[42px] w-[122px] items-center gap-8 border-r-2 border-[#c6c6c6] pl-[30px] pt-2">
        <Tool label="Previous sheet">
          <Icon w={15} h={20}>
            <path d="M15 0v20L0 10z" fill="#b2b2b2" />
          </Icon>
        </Tool>
        <Tool label="Next sheet">
          <Icon w={15} h={20}>
            <path d="M0 0v20l15-10z" fill="#a8a8a8" />
          </Icon>
        </Tool>
      </div>
      <button type="button" className="h-[42px] w-[252px] border-r-2 border-[#c6c6c6] pt-1.5">
        INSTRUCTIONS
      </button>
      <button type="button" className="h-[42px] w-[158px] border-r-2 border-[#c6c6c6] pt-1.5">
        Iris
      </button>
      <button type="button" className="h-[42px] w-[413px] whitespace-nowrap pt-1.5">
        Cricket chirps vs temperature
      </button>
      <button
        type="button"
        className="-mt-0.5 h-[46px] w-[350px] whitespace-nowrap rounded-b-lg border-2 border-t-0 border-[#b4b4b4] bg-white pt-2 font-bold text-[#37794a] shadow-sm"
      >
        Systolic blood pressure
      </button>
      <button
        type="button"
        aria-label="New sheet"
        className="flex h-[42px] w-[77px] items-center justify-center border-r-2 border-[#c6c6c6] pt-1"
      >
        <Icon w={20} h={20}>
          <path d="M10 0v20M0 10h20" stroke="#505050" strokeWidth="3" />
        </Icon>
      </button>
    </div>
  );
}

function StatusBar() {
  return (
    <footer className="flex h-11 shrink-0 items-center bg-linear-to-b from-[#dcdcdc] to-[#c0c0c0] pl-12 pr-[50px] text-[24px] text-[#4d4d4d]">
      <span>Ready</span>
      <button type="button" className="ml-10 flex items-center gap-1">
        <Icon w={33} h={32}>
          <circle cx="13" cy="5" r="4" stroke="#5a5a5a" strokeWidth="2" />
          <path
            d="M9 9L4 6C1 5 0 8 2 9l6 5v7L5 28c-1 3 2 4 3 2l5-9M17 9l5-3c3-1 4 2 2 3l-6 5v6M15 25l5 6L32 18"
            stroke="#5a5a5a"
            strokeWidth="2"
          />
        </Icon>
        Accessibility: Good to go
      </button>
      <div className="ml-auto flex h-full items-center">
        <Tool label="Normal view" className="h-full w-[74px] bg-[#989898]">
          <Icon w={28} h={32}>
            <rect x="1" y="1" width="26" height="30" stroke="#f4f4f4" strokeWidth="2" />
            <path d="M10 1v30M18 1v30M1 11h26M1 21h26" stroke="#f4f4f4" strokeWidth="2" />
          </Icon>
        </Tool>
        <Tool label="Page Layout view" className="ml-5">
          <Icon w={28} h={32}>
            <path
              d="M1 1h26v30H1zM7 6h14v20H7zM10 11h8M10 16h8M10 21h8"
              stroke="#5f5f5f"
              strokeWidth="2"
            />
          </Icon>
        </Tool>
        <Tool label="Page Break view" className="ml-[43px]">
          <Icon w={28} h={32}>
            <path d="M1 1h26v30H1zM9 1v17M17 1v17M1 18h16" stroke="#5f5f5f" strokeWidth="2" />
          </Icon>
        </Tool>
        <Tool label="Zoom out" className="ml-[38px]">
          <Icon w={16} h={16}>
            <path d="M0 8h16" stroke="#5a5a5a" strokeWidth="4" />
          </Icon>
        </Tool>
        <input
          type="range"
          aria-label="Zoom"
          min={10}
          max={190}
          defaultValue={100}
          className="ml-3.5 h-2 w-[200px] appearance-none rounded-full bg-[#8f8f8f] [&::-webkit-slider-thumb]:size-8 [&::-webkit-slider-thumb]:appearance-none [&::-webkit-slider-thumb]:rounded-full [&::-webkit-slider-thumb]:bg-[#f2f2f2] [&::-webkit-slider-thumb]:shadow"
        />
        <Tool label="Zoom in" className="ml-3.5">
          <Icon w={16} h={16}>
            <path d="M0 8h16M8 0v16" stroke="#5a5a5a" strokeWidth="4" />
          </Icon>
        </Tool>
        <span className="ml-[34px]">100%</span>
      </div>
    </footer>
  );
}

interface DockItemProps {
  name: string;
  tile?: string;
  running?: string;
  badge?: number;
  children: ReactNode;
}

function DockItem({ name, tile = '', running, badge, children }: DockItemProps) {
  return (
    <div className="relative flex h-full flex-col items-center pt-[19px]">
      <button
        type="button"
        aria-label={name}
        className={`relative block size-[92px] overflow-hidden rounded-[22px] shadow-md ${tile}`}
      >
        {children}
      </button>
      {badge && (
        <span className="absolute -right-4 top-2 flex size-11 items-center justify-center rounded-full bg-[#ec5440] text-[26px] text-white shadow">
          {badge}
        </span>
      )}
      {running && <span className={`mt-[19px] size-2 rounded-full ${running}`} />}
    </div>
  );
}

function Art({ children }: { children: ReactNode }) {
  return (
    <svg viewBox="0 0 92 92" className="block size-full" fill="none" aria-hidden="true">
      {children}
    </svg>
  );
}

const launchpadTiles = [
  'bg-linear-to-b from-[#86f06c] to-[#5ccb45]',
  'bg-linear-to-b from-[#f7cd4b] to-[#efa93c]',
  'bg-linear-to-b from-[#eea03c] to-[#dc7434]',
  'bg-linear-to-b from-[#e54537] to-[#a8211b]',
  'bg-linear-to-b from-[#c6d2d8] to-[#6f7678]',
  'bg-linear-to-b from-[#ea4358] to-[#e65c6c]',
  'bg-linear-to-b from-[#af5ce0] to-[#6c2ea6]',
  'bg-linear-to-b from-[#5bcff8] to-[#2457e0]',
  'bg-linear-to-b from-[#7ddcca] to-[#53b283]',
];

const petals = [
  ['#f2a33c', 0],
  ['#f5e13c', 45],
  ['#b4d650', 90],
  ['#78c496', 135],
  ['#74b3e6', 180],
  ['#938bd2', 225],
  ['#cf86bd', 270],
  ['#ee6a58', 315],
] as const;

function Dock() {
  const safariTicks = Array.from({ length: 60 }, (_, i) => i * 6);
  const gearTeeth = Array.from({ length: 48 }, (_, i) => i * 7.5);

  return (
    <nav
      aria-label="Dock"
      className="mx-[105px] mb-2.5 mt-0.5 flex h-36 shrink-0 rounded-[44px] border-2 border-white/25 bg-[linear-gradient(180deg,rgba(200,140,110,0.28)_0%,rgba(200,140,110,0)_80%),linear-gradient(90deg,#7097cd_0%,#719fd8_13%,#a79aaa_18%,#de9868_22%,#f3a35a_32%,#f98a58_39%,#f6a158_48%,#f8925a_56%,#f97c5a_66%,#f89c5a_78%,#f89c5a_88%,#f68a58_100%)] pl-[17px] pr-[25px] shadow-lg"
    >
      <div className="flex flex-1 justify-between">
        <DockItem name="Finder" running="bg-[#08215f]">
          <Art>
            <defs>
              <linearGradient id="finder" x1="0" y1="0" x2="0" y2="1">
                <stop stopColor="#5fcaf9" />
                <stop offset="1" stopColor="#3268ec" />
              </linearGradient>
            </defs>
            <rect width="92" height="92" fill="#e3e5ea" />
            <path d="M0 0h50C42 20 39 36 39 53h13c0 15 2 27 5 39H0z" fill="url(#finder)" />
            <path d="M24 28v6M67 28v6" stroke="#222" strokeWidth="4.500" strokeLinecap="round" />
            <path d="M19 62c14 14 40 14 54 0" stroke="#151515" strokeWidth="3" strokeLinecap="round" />
          </Art>
        </DockItem>
        <DockItem name="Launchpad" tile="bg-[#cddaec]">
          <span className="grid size-full grid-cols-3 place-content-center justify-center gap-[5px] px-[15px]">
            {launchpadTiles.map((tile) => (
              <span key={tile} className={`size-[17px] rounded ${tile}`} />
            ))}
          </span>
        </DockItem>
        <DockItem name="Safari" tile="bg-linear-to-b from-white to-[#d5d5d5]">
          <Art>
            <defs>
              <linearGradient id="safari" x1="0" y1="0" x2="0" y2="1">
                <stop stopColor="#4aa2ee" />
                <stop offset="1" stopColor="#3465dc" />
              </linearGradient>
            </defs>
            <circle cx="46" cy="46" r="39.500" fill="url(#safari)" />
            {safariTicks.map((angle) => (
              <path
                key={angle}
                d={angle % 12 ? 'M46 9v4' : 'M46 9v7'}
                transform={`rotate(${angle} 46 46)`}
                stroke="#cfe3fa"
                strokeWidth="1.200"
              />
            ))}
            <path d="M75 22L42 43l7 7z" fill="#e0483e" />
            <path d="M18 70l24-27 7 7z" fill="#ececec" />
          </Art>
        </DockItem>
        <DockItem name="Google Chrome" tile="bg-[#fbf9f8]" running="bg-[#33262b]">
          <Art>
            <circle cx="46" cy="46" r="39.500" fill="#f1bf45" />
            <path d="M46 46L12 26A39.500 39.500 0 0 1 80 26z" fill="#d34d3d" />
            <path d="M46 46l16 10-16 29.500A39.500 39.500 0 0 1 12 26l16 28z" fill="#4f9c52" />
            <path d="M12 26l16 30 18-10V27h34A39.500 39.500 0 0 0 12 26z" fill="#d34d3d" />
            <path d="M12 26a39.500 39.500 0 0 0 34 59.500L62 57 46 62 28 54z" fill="#4f9c52" />
            <circle cx="46" cy="46" r="19.500" fill="white" />
            <circle cx="46" cy="46" r="15.500" fill="#4379e6" />
          </Art>
        </DockItem>
        <DockItem name="Messages" tile="bg-linear-to-b from-[#8df485] to-[#55be45]" badge={93}>
          <Art>
            <defs>
              <linearGradient id="bubble" x1="0" y1="0" x2="0" y2="1">
                <stop stopColor="white" />
                <stop offset="0.7" stopColor="#c9e6c6" />
                <stop offset="1" stopColor="#daf6d6" />
              </linearGradient>
            </defs>
            <path
              d="M46 16c19 0 34 12 34 28S65 72 46 72c-4 0-7-.4-10-1.300-3 3-8 5-12 5.300 3-3 4-6 4-9.600C18 61 12 54 12 44c0-16 15-28 34-28z"
              fill="url(#bubble)"
            />
          </Art>
        </DockItem>
        <DockItem name="Mail" tile="bg-linear-to-b from-[#3a72ee] to-[#5cbcf7]">
          <Art>
            <rect x="14" y="25" width="64" height="42" rx="3" fill="#f0f0f1" />
            <path
              d="M15 66l19-20M77 66L58 46M15 27l24 25c5 4 9 4 14 0l24-25"
              stroke="#a5a8ad"
              strokeWidth="1.800"
            />
          </Art>
        </DockItem>
        <DockItem name="Maps" tile="bg-[#6fd070]">
          <Art>
            <path d="M0 37l36 55H0z" fill="#dd8fd0" />
            <path d="M50 68l30 24H48z" fill="#f7cd45" />
            <path d="M0 12l22 20v28L0 37zM48 40l44 32v20H82L48 66z" fill="#f0f0f3" />
            <path d="M21 0h29v92H21z" fill="#e9eaee" />
            <path d="M25 0h20v50H25z" fill="#3478f0" />
            <path d="M65 0c0 18 10 28 27 28" stroke="white" strokeWidth="18" />
            <path d="M65 0c0 18 10 28 27 28" stroke="#c3c6cf" strokeWidth="13" />
            <circle cx="35" cy="57" r="24" fill="white" />
            <circle cx="35" cy="57" r="20" fill="#3478f0" />
            <path d="M35 43l10 25-10-6-10 6z" fill="#f1f3f8" />
          </Art>
        </DockItem>
        <DockItem name="Photos" tile="bg-[#fdfbfb]">
          <Art>
            {petals.map(([color, angle]) => (
              <rect
                key={angle}
                x="34"
                y="6"
                width="24"
                height="39"
                rx="12"
                fill={color}
                className="mix-blend-multiply"
                transform={`rotate(${angle} 46 46)`}
              />
            ))}
          </Art>
        </DockItem>
        <DockItem name="FaceTime" tile="bg-linear-to-b from-[#8af283] to-[#54bf46]">
          <Art>
            <defs>
              <linearGradient id="camera" x1="0" y1="0" x2="0" y2="1">
                <stop stopColor="white" />
                <stop offset="1" stopColor="#c3e3c0" />
              </linearGradient>
            </defs>
            <rect x="14" y="26" width="45" height="40" rx="9" fill="url(#camera)" />
            <path d="M61 42l13-13c2-1 3 0 3 2v31c0 2-1 3-3 1L61 52z" fill="url(#camera)" />
          </Art>
        </DockItem>
        <DockItem name="Calendar" tile="bg-[#f8f7f6]">
          <span className="flex h-[28px] items-center justify-center bg-[#e15a51] text-[20px] font-semibold text-white">
            SEP
          </span>
          <span className="block text-center text-[58px] font-light leading-[60px] text-[#1c1c1c]">
            9
          </span>
        </DockItem>
        <DockItem name="Contacts">
          <Art>
            <path d="M84 12h3c3 0 5 4 5 8v13h-8z" fill="#c9c9c7" />
            <path d="M84 33h8v17h-8z" fill="#6fc0ee" />
            <path d="M84 50h8v15h-8z" fill="#f09a37" />
            <path d="M84 65h8v6c0 5-3 9-8 10z" fill="#72d86b" />
            <rect width="88" height="92" rx="22" fill="#a3824f" />
            <path d="M0 20C0 10 3 5 6 3v86c-3-2-6-8-6-14z" fill="#86683a" />
            <circle cx="46" cy="46" r="28" stroke="#7f6137" strokeWidth="2" />
            <ellipse cx="46" cy="40" rx="9.500" ry="11" fill="#856638" />
            <path d="M27 64c8-10 30-10 38 0-10 13-28 13-38 0z" fill="#856638" />
          </Art>
        </DockItem>
        <DockItem name="Reminders" tile="bg-linear-to-b from-white to-[#f3f1ef]">
          <Art>
            {[
              ['#3478f6', 23],
              ['#e64a3c', 46],
              ['#ec9a36', 69],
            ].map(([color, y]) => (
              <g key={y}>
                <circle cx="18" cy={y} r="7" stroke={String(color)} strokeWidth="1.800" />
                <circle cx="18" cy={y} r="4.800" fill={String(color)} />
                <path d={`M35 ${y}h46`} stroke="#a9a9ab" strokeWidth="2" />
              </g>
            ))}
          </Art>
        </DockItem>
        <DockItem name="Notes" tile="bg-linear-to-b from-[#f7f6f4] to-[#e4e3de]">
          <Art>
            <defs>
              <linearGradient id="notes" x1="0" y1="0" x2="0" y2="1">
                <stop stopColor="#fae07a" />
                <stop offset="1" stopColor="#f5c740" />
              </linearGradient>
            </defs>
            <rect width="92" height="23" fill="url(#notes)" />
            <path d="M0 24h92" stroke="#a9a594" strokeWidth="2" />
            <path d="M2 28h90" stroke="#bdbbb5" strokeWidth="1.600" strokeDasharray="1.600 2" />
            <path d="M0 46h92M0 69h92" stroke="#d3d2ce" strokeWidth="1.600" />
          </Art>
        </DockItem>
        <DockItem name="Freeform" tile="bg-white">
          <Art>
            <defs>
              <linearGradient id="sun" x1="0" y1="0" x2="0" y2="1">
                <stop stopColor="#f3b63c" />
                <stop offset="0.6" stopColor="#ea7a66" />
                <stop offset="1" stopColor="#e66468" />
              </linearGradient>
              <linearGradient id="pane" x1="0" y1="0" x2="0" y2="1">
                <stop stopColor="#63d8fa" />
                <stop offset="1" stopColor="#58a3d4" />
              </linearGradient>
            </defs>
            <circle cx="37" cy="55" r="27" fill="url(#sun)" />
            <rect x="30" y="11" width="50" height="51" rx="5" fill="url(#pane)" opacity="0.92" />
            <path d="M30 29a27 27 0 0 1 33 33H35c-3 0-5-2-5-5z" fill="#86aee0" opacity="0.8" />
            <path
              d="M19 59c4-10 11-25 17-25 9 0 1 23 9 23s8-19 14-19c7 0 1 15 9 15 6 0 8-10 14-12"
              stroke="#17344f"
              strokeWidth="4.500"
              strokeLinecap="round"
            />
          </Art>
        </DockItem>
        <DockItem name="Music" tile="bg-linear-to-b from-[#ea6377] to-[#e6383e]">
          <Art>
            <path
              d="M34 24c0-2 1-3 3-3.500l26-6c2-.5 4 .5 4 3V60c0 6-4 10-9 10-4 0-7-3-7-6.500 0-7 11-6 11-12V28l-22 5v34c0 6-4 10-9 10-4 0-7-3-7-6.500C24 63 34 64 34 58z"
              fill="white"
            />
          </Art>
        </DockItem>
        <DockItem name="App Store" tile="bg-linear-to-b from-[#56b5f1] to-[#2f5fd8]">
          <Art>
            <path
              d="M50 20L29 55M41 20l30 51M24 66l-2 5"
              stroke="white"
              strokeWidth="7"
              strokeLinecap="round"
            />
            <path d="M17 57h58" stroke="white" strokeWidth="7" strokeLinecap="round" />
          </Art>
        </DockItem>
        <DockItem name="System Settings" tile="bg-linear-to-b from-[#d2dae0] to-[#8f8f8f]">
          <Art>
            <circle cx="46" cy="46" r="40" fill="#2b2b2b" />
            <circle cx="46" cy="46" r="33" stroke="#b5b5b5" strokeWidth="2.400" />
            {gearTeeth.map((angle) => (
              <path
                key={angle}
                d="M46 9v5"
                transform={`rotate(${angle} 46 46)`}
                stroke="#a5a5a5"
                strokeWidth="2"
              />
            ))}
            <circle cx="46" cy="46" r="29" fill="#3a3a3a" stroke="#777" strokeWidth="2" />
            <circle cx="46" cy="46" r="22" stroke="#9a9a9a" strokeWidth="3.500" />
            <circle cx="46" cy="46" r="14" fill="#6c6c6c" />
            <path d="M46 46h31M46 46L30 19M46 46L30 73" stroke="#b9b9b9" strokeWidth="4" />
            <circle cx="46" cy="46" r="5" fill="#2b2b2b" stroke="#b9b9b9" strokeWidth="2" />
          </Art>
        </DockItem>
      </div>
      <span className="mx-[41px] mt-[16px] h-[108px] w-0.5 bg-[#c4622f]" />
      <div className="flex gap-[29px]">
        <DockItem name="Zoom" tile="bg-linear-to-tr from-[#1c3fc0] via-[#2a5cf2] to-[#3d7be8]">
          <span className="block pb-1 text-center font-[Lato,sans-serif] text-[27px] font-bold leading-8 text-white">
            zoom
          </span>
        </DockItem>
        <DockItem name="Cricut" tile="bg-white">
          <span className="block pb-1 text-center font-[Lato,sans-serif] text-[29px] font-bold leading-8 text-[#45a67b]">
            cricut
          </span>
        </DockItem>
        <DockItem name="Microsoft Excel" tile="bg-white" running="bg-[#7a1c08]">
          <Art>
            <rect x="24" y="15" width="52" height="61" rx="2" fill="#2a5c39" />
            <path d="M24 17c0-1 1-2 2-2h24v31H24z" fill="#4ca36b" />
            <path d="M50 15h24c1 0 2 1 2 2v14H50z" fill="#62bf86" />
            <path d="M50 31h26v15H50z" fill="#4ca36b" />
            <path d="M50 46h26v15H50z" fill="#377948" />
            <rect x="8" y="28" width="35" height="35" rx="2.500" fill="#34763f" />
            <path d="M19 36l14 19M33 36L19 55" stroke="white" strokeWidth="4" />
          </Art>
        </DockItem>
      </div>
      <span className="mx-[41px] mt-[16px] h-[108px] w-0.5 bg-[#c4622f]" />
      <button type="button" aria-label="Trash" className="mt-[9px] self-start">
        <Icon w={84} h={110}>
          <path
            d="M4 24l8-14 8 4 8-10 10 8 8-4 6-5 8 8 8-2 6 8 6 8-6 10H10z"
            fill="#d9d9d6"
          />
          <path d="M14 14l8 4-6 8zM44 8l8 10-8 8zM64 12l6 8-8 6z" fill="#4a4a4a" />
          <path d="M30 6l8 10-12 4zM54 8l8 4-6 12z" fill="#fafafa" />
          <path d="M28 16l10-2 2 6-8 4z" fill="#42b8e8" />
          <path d="M50 14l7 4-3 8-6-3z" fill="#3a5f9e" />
          <path d="M38 20l6-2 1 8h-6z" fill="#c96d3c" />
          <path
            d="M2 21c8 9 72 9 80 0l-9 78c-1 7-10 10-31 10s-30-3-31-10z"
            fill="#dedddb"
            opacity="0.96"
          />
          <path d="M20 30c8 22 30 20 42 2-4 20-26 36-42-2z" fill="#efefee" />
          <path d="M11 92c8 8 54 8 62 0l-1 8c-2 7-14 9-30 9s-29-2-30-9z" fill="#f4f4f4" />
          <path d="M2 21c8 9 72 9 80 0" stroke="#f1f1f0" strokeWidth="2" />
        </Icon>
      </button>
    </nav>
  );
}

export default function App() {
  return (
    <div className="flex h-screen flex-col overflow-hidden bg-[linear-gradient(90deg,#3e68a6_0%,#3f6fa9_21%,#c06a3e_21%,#c5713c_34%,#c2522b_34%,#c4572c_43%,#c07c3a_45%,#c06a33_58%,#bf4728_66%,#c0492a_71%,#c47a3c_74%,#c66a34_90%,#cf5f30_100%)] font-[Inter,sans-serif]">
      <MenuBar />
      <div className="mt-0.5 flex min-h-0 flex-1 flex-col overflow-hidden rounded-[20px] bg-linear-to-b from-[#f6f6f6] to-[#efefef] to-20% shadow-xl">
        <TitleBar />
        <RibbonTabs />
        <Ribbon />
        <FormulaBar />
        <div className="h-1.5 shrink-0 border-y-2 border-b-[#b0b0b0] border-t-[#a8a8a8] bg-[#e8e8e8]" />
        <Sheet />
        <SheetTabs />
        <StatusBar />
      </div>
      <Dock />
    </div>
  );
}
